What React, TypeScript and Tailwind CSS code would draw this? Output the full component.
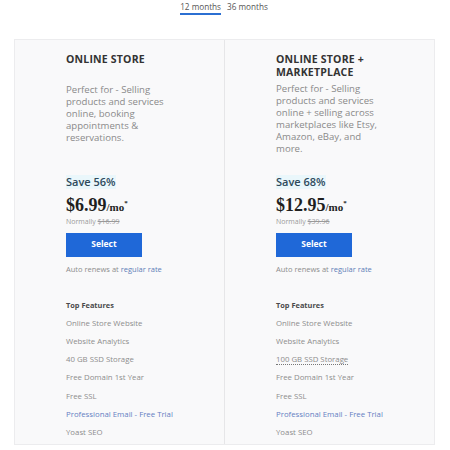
import React from "react";

type Plan = {
  title: string[];
  titleGap: string;
  desc: string[];
  save: string;
  price: string;
  normally: string;
  features: { label: string; kind?: "link" | "dotted" }[];
};

const plans: Plan[] = [
  {
    title: ["ONLINE STORE"],
    titleGap: "mb-[18px]",
    desc: ["Perfect for - Selling", "products and services", "online, booking", "appointments &", "reservations."],
    save: "Save 56%",
    price: "$6.99",
    normally: "$16.99",
    features: [
      { label: "Online Store Website" },
      { label: "Website Analytics" },
      { label: "40 GB SSD Storage" },
      { label: "Free Domain 1st Year" },
      { label: "Free SSL" },
      { label: "Professional Email - Free Trial", kind: "link" },
      { label: "Yoast SEO" },
    ],
  },
  {
    title: ["ONLINE STORE +", "MARKETPLACE"],
    titleGap: "mb-[4px]",
    desc: [
      "Perfect for - Selling",
      "products and services",
      "online + selling across",
      "marketplaces like Etsy,",
      "Amazon, eBay, and",
      "more.",
    ],
    save: "Save 68%",
    price: "$12.95",
    normally: "$39.96",
    features: [
      { label: "Online Store Website" },
      { label: "Website Analytics" },
      { label: "100 GB SSD Storage", kind: "dotted" },
      { label: "Free Domain 1st Year" },
      { label: "Free SSL" },
      { label: "Professional Email - Free Trial", kind: "link" },
      { label: "Yoast SEO" },
    ],
  },
];

function PlanColumn({ plan, first }: { plan: Plan; first: boolean }) {
  return (
    <div className={`pl-[51px] pt-[13px] pb-[2px] leading-none ${first ? "" : "border-l border-[#e6e6e8]"}`}>
      <div className="h-[122px]">
        <h3 className={`text-[10.5px] leading-[13px] font-bold text-[#333] tracking-[0.2px] ${plan.titleGap}`}>
          {plan.title.map((t) => (
            <div key={t}>{t}</div>
          ))}
        </h3>
        <p className="text-[9.6px] leading-[12px] text-[#8a8a8a]">
          {plan.desc.map((d) => (
            <span key={d} className="block">
              {d}
            </span>
          ))}
        </p>
      </div>
      <div className="w-fit bg-[#eaf7fb] text-[11px] leading-[14px] font-semibold text-[#2e4a5c]">{plan.save}</div>
      <div className="mt-[5px] h-[22px] flex items-baseline font-['Liberation_Serif',serif] font-bold text-[#1f1f1f] leading-[22px]">
        <span className="text-[18px]">{plan.price}</span>
        <span className="text-[11px]">/mo</span>
        <span className="text-[7px] leading-none self-start mt-[6px]">*</span>
      </div>
      <div className="mt-px text-[7px] leading-[9px] text-[#9a9a9a]">
        Normally <span className="line-through">{plan.normally}</span>
      </div>
      <button className="block mt-[6.5px] w-[76px] h-[24px] bg-[#1f68d8] text-white text-[8.5px] font-bold">
        Select
      </button>
      <div className="mt-[7px] text-[7.5px] leading-[10px] text-[#8d8d8d]">
        Auto renews at <span className="text-[#5f7fb8]">regular rate</span>
      </div>
      <div className="mt-[26px] text-[7.4px] leading-[10px] font-bold text-[#4a4a4a]">Top Features</div>
      <ul className="mt-[4px]">
        {plan.features.map((f) => (
          <li
            key={f.label}
            className={`text-[7.8px] leading-[18.3px] ${f.kind === "link" ? "text-[#6580c2]" : "text-[#8d8d8d]"}`}
          >
            <span className={f.kind === "dotted" ? "border-b border-dotted border-[#777]" : ""}>{f.label}</span>
          </li>
        ))}
      </ul>
    </div>
  );
}

export default function App() {
  return (
    <div className="w-[450px] h-[450px] bg-white font-['Open_Sans',sans-serif] overflow-hidden">
      <div className="flex justify-center gap-[6px] pt-[1px] h-[39px] text-[8.2px] text-[#555]">
        <span className="h-[14px] leading-[12px] border-b-2 border-[#2b6fd2] ml-[-2px]">12 months</span>
        <span className="h-[14px] leading-[12px]">36 months</span>
      </div>
      <div className="mx-[14px] w-[421px] grid grid-cols-[209px_1fr] bg-[#f9f9fa] border border-[#ececee]">
        {plans.map((p, i) => (
          <PlanColumn key={p.price} plan={p} first={i === 0} />
        ))}
      </div>
    </div>
  );
}
